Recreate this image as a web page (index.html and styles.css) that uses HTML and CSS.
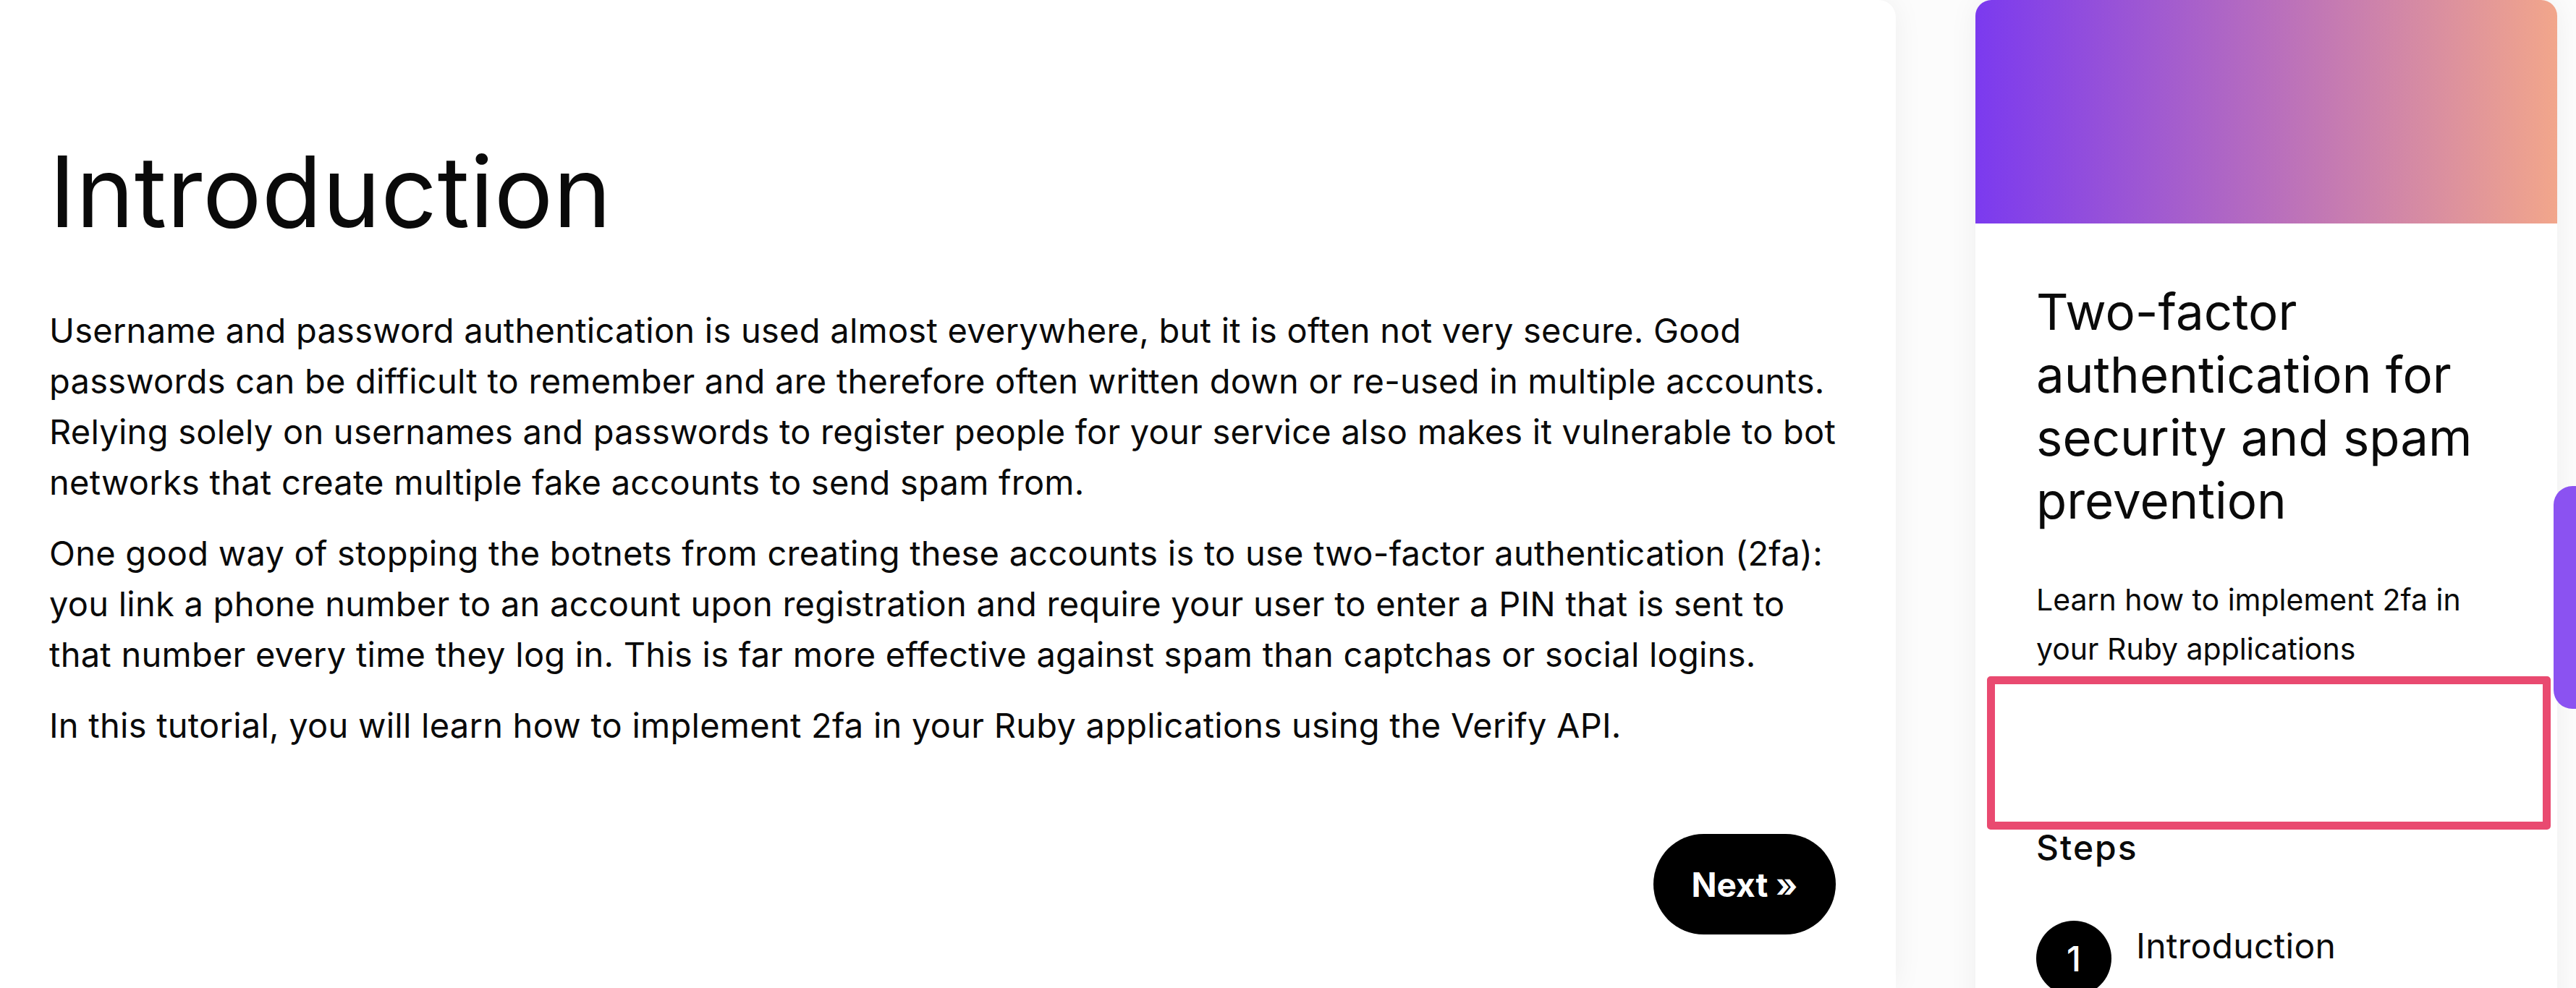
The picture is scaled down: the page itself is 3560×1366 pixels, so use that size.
FILE: index.html
```html
<!DOCTYPE html>
<html lang="en">
<head>
<meta charset="utf-8">
<title>Two-factor authentication for security and spam prevention</title>
<link rel="stylesheet" href="styles.css">
</head>
<body>
<div class="page">
  <main class="main-card">
    <h1 class="page-title">Introduction</h1>
    <div class="content">
      <p>Username and password authentication is used almost everywhere, but it is often not very secure. Good passwords can be difficult to remember and are therefore often written down or re-used in multiple accounts. Relying solely on usernames and passwords to register people for your service also makes it vulnerable to bot networks that create multiple fake accounts to send spam from.</p>
      <p>One good way of stopping the botnets from creating these accounts is to use two-factor authentication (2fa): you link a phone number to an account upon registration and require your user to enter a PIN that is sent to that number every time they log in. This is far more effective against spam than captchas or social logins.</p>
      <p>In this tutorial, you will learn how to implement 2fa in your Ruby applications using the Verify API.</p>
    </div>
    <div class="pager">
      <a class="next-btn" href="#">Next »</a>
    </div>
  </main>
  <aside class="side-card">
    <div class="side-banner"></div>
    <div class="side-body">
      <h2 class="side-title">Two-factor authentication for security and spam prevention</h2>
      <p class="side-desc">Learn how to implement 2fa in your Ruby applications</p>
      <div class="ad-slot"></div>
      <h3 class="steps-title">Steps</h3>
      <ol class="steps">
        <li class="step"><span class="step-num">1</span><span class="step-label">Introduction</span></li>
        <li class="step"><span class="step-num">2</span><span class="step-label">Prerequisites</span></li>
      </ol>
    </div>
  </aside>
</div>
<div class="feedback-tab"></div>
</body>
</html>
```
FILE: styles.css
```css
html, body {
  margin: 0;
  padding: 0;
}
body {
  background: #fcfcfc;
  font-family: Inter, "Noto Sans", "Liberation Sans", sans-serif;
  color: #0a0a0a;
  height: 1366px;
  overflow: hidden;
}
.page {
  display: flex;
  align-items: flex-start;
}
.main-card {
  box-sizing: border-box;
  width: 2620px;
  min-height: 1366px;
  background: #ffffff;
  border-radius: 0 24px 0 0;
  box-shadow: 0 0 40px rgba(0, 0, 0, 0.06);
  padding: 186px 70px 0 68px;
  flex-shrink: 0;
}
.page-title {
  margin: 0;
  font-size: 136px;
  line-height: 157px;
  font-weight: 400;
  letter-spacing: 0.4px;
}
.content {
  margin-top: 79px;
}
.content p {
  margin: 0 0 28px;
  font-size: 47px;
  line-height: 70px;
  letter-spacing: 0.25px;
}
.content p:last-child {
  margin-bottom: 0;
}
.pager {
  display: flex;
  justify-content: flex-end;
  margin-top: 115px;
  padding-right: 13px;
}
.next-btn {
  display: inline-flex;
  align-items: center;
  justify-content: center;
  box-sizing: border-box;
  height: 139px;
  width: 252px;
  border-radius: 70px;
  background: #000000;
  color: #ffffff;
  font-size: 46px;
  font-weight: 700;
  text-decoration: none;
}
.side-card {
  box-sizing: border-box;
  width: 804px;
  min-height: 1366px;
  margin-left: 110px;
  background: #ffffff;
  border-radius: 22px 22px 0 0;
  overflow: hidden;
  box-shadow: 0 0 40px rgba(0, 0, 0, 0.06);
  flex-shrink: 0;
}
.side-banner {
  height: 309px;
  background: linear-gradient(90deg, #7b3aef 0%, #b76dbe 50%, #f2a68b 100%);
}
.side-body {
  padding: 79px 84px 0 84px;
}
.side-title {
  margin: 0;
  font-size: 69px;
  line-height: 87px;
  font-weight: 400;
}
.side-desc {
  margin: 59px 0 0;
  font-size: 41px;
  line-height: 68px;
}
.ad-slot {
  box-sizing: border-box;
  height: 212px;
  margin: 4px -75px 0 -68px;
  border: 11px solid #e94a70;
  border-radius: 5px;
}
.steps-title {
  margin: 0;
  font-size: 48px;
  line-height: 50px;
  font-weight: 500;
  letter-spacing: 2px;
}
.steps {
  list-style: none;
  margin: 76px 0 0;
  padding: 0;
}
.step {
  display: flex;
  align-items: flex-start;
  margin-bottom: 60px;
}
.step-num {
  width: 104px;
  height: 104px;
  border-radius: 50%;
  background: #000000;
  color: #ffffff;
  display: flex;
  align-items: center;
  justify-content: center;
  font-size: 48px;
  font-weight: 500;
  flex-shrink: 0;
}
.step-label {
  margin-left: 34px;
  padding-top: 7px;
  font-size: 48px;
  line-height: 56px;
  letter-spacing: 0.3px;
}
.feedback-tab {
  position: fixed;
  right: 0;
  top: 672px;
  width: 31px;
  height: 308px;
  background: #8b52f1;
  border-radius: 26px 0 0 26px;
}
```
